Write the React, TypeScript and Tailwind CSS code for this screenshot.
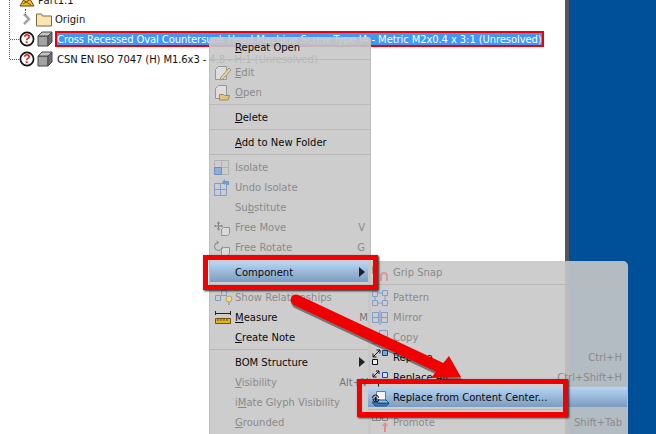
import type { ReactNode } from 'react'

type Row = {
  label?: string
  key?: number
  off?: boolean
  hot?: boolean
  keys?: string
  sub?: boolean
  icon?: ReactNode
  sep?: boolean
}

const Line = ({ d, c = '#7f9ccb' }: { d: string; c?: string }) => <path d={d} fill="none" stroke={c} strokeWidth="1" />

const ico = (body: ReactNode, o = 1) => (
  <svg width="20" height="20" viewBox="0 0 20 20" style={{ opacity: o }}>
    {body}
  </svg>
)

const FreeIcon = ({ rotate }: { rotate?: boolean }) =>
  ico(
    <>
      {rotate ? <Line d="M5.500 5.500a4 4 0 1 0 4 4M3.500 4l2 1.500-2 1.500" c="#777" /> : <Line d="M1 9h9M5.500 4.500v9M4 6h3M4 12h3M2.500 8v2M8.500 8v2" c="#777" />}
      <path d="M8.500 12.500l2-2h6v6l-2 2h-6z" fill="#ddd" stroke="#888" />
    </>,
    0.85,
  )

// 左边菜单
const leftMenu: Row[] = [
  { label: 'Repeat Open', key: 0 },
  { sep: true },
  {
    label: 'Edit',
    key: 0,
    off: true,
    icon: ico(
      <>
        <path d="M2.500 7.500l3-3h8v13h-11z" fill="#dedede" stroke="#969696" />
        <path d="M8 15l8-9 2 2-8 9-3 1z" fill="#e2d3a0" stroke="#a09878" />
      </>,
    ),
  },
  {
    label: 'Open',
    key: 0,
    off: true,
    icon: ico(
      <>
        <path d="M2.500 6.500l3-3h8v13h-11z" fill="#dedede" stroke="#969696" />
        <path d="M6.500 12.500h4l1 1h5l-1.500 4.500h-8.500z" fill="#e4c27c" stroke="#a08a58" />
      </>,
    ),
  },
  { sep: true },
  { label: 'Delete', key: 0 },
  { sep: true },
  { label: 'Add to New Folder', key: 0 },
  { sep: true },
  {
    label: 'Isolate',
    off: true,
    icon: ico(
      <>
        <Line d="M1.500 3.500h7v7h-7zM8.500 3.500h7v7h-7zM8.500 10.500h7v7h-7z" c="#b0b0b0" />
        <path d="M1.500 10.500h7v7h-7z" fill="#8fb0d0" stroke="#6d8fc4" />
      </>,
    ),
  },
  {
    label: 'Undo Isolate',
    off: true,
    icon: ico(
      <>
        <Line d="M1.500 6.500h6v6h-6zM7.500 6.500h6v6h-6zM1.500 12.500h6v6h-6zM7.500 12.500h6v6h-6z" />
        <path d="M9 5l3-3v2h4v4h-2v-2h-2v2z" fill="#6d9bd0" />
      </>,
    ),
  },
  { label: 'Substitute', key: 2, off: true },
  { label: 'Free Move', off: true, keys: 'V', icon: <FreeIcon /> },
  { label: 'Free Rotate', off: true, keys: 'G', icon: <FreeIcon rotate /> },
  { sep: true },
  { label: 'Component', hot: true, sub: true },
  { sep: true },
  {
    label: 'Show Relationships',
    off: true,
    icon: ico(
      <>
        <Line d="M2.500 8.500h5v5h-5zM8.500 3.500h5v5h-5z" />
        <circle cx="16" cy="12" r="3" fill="#f0d890" stroke="#b8a060" />
        <path d="M15 15h2v3h-2z" fill="#aaa" />
      </>,
    ),
  },
  {
    label: 'Measure',
    key: 0,
    keys: 'M',
    icon: ico(
      <>
        <path d="M2.500 4v4M17.500 4v4M2.500 6.500h15" stroke="#222" fill="none" />
        <path d="M2.500 11.500h15v5h-15z" fill="#e6b422" stroke="#6f5408" />
        <path d="M5 12v2M8 12v2M11 12v2M14 12v2" stroke="#5a4408" />
      </>,
    ),
  },
  { label: 'Create Note', key: 0 },
  { sep: true },
  { label: 'BOM Structure', sub: true },
  { label: 'Visibility', key: 0, off: true, keys: 'Alt+V' },
  { label: 'iMate Glyph Visibility', key: 1, off: true },
  { label: 'Grounded', key: 0, off: true },
]

// 右边子菜单
const rightMenu: Row[] = [
  {
    label: 'Grip Snap',
    off: true,
    icon: ico(
      <>
        <Line d="M1.500 4.500h5v7h-5z" c="#999" />
        <path d="M10 19v-5a3 3 0 0 1 6 0v5" fill="none" stroke="#d99a9a" strokeWidth="2" />
      </>,
    ),
  },
  { sep: true },
  {
    label: 'Pattern',
    off: true,
    icon: ico(<Line d="M1.500 4.500h5v5h-5zM11.500 3.500h5v5h-5zM1.500 13.500h5v5h-5zM11.500 13.500h5v5h-5zM4 10v3M14 9v4M7 16h4M7 6h4" />),
  },
  { label: 'Mirror', off: true, icon: ico(<Line d="M1.500 5.500h6v5h-6zM1.500 10.500h6v5h-6zM10.500 5.500h6v5h-6zM10.500 10.500h6v5h-6zM9 3v15" />) },
  { label: 'Copy', off: true, icon: ico(<Line d="M1.500 10.500h6v6h-6zM8.500 3.500h8v6h-8z" />) },
  {
    label: 'Replace',
    keys: 'Ctrl+H',
    icon: ico(
      <>
        <path d="M11.500 3.500h5v5h-5z" fill="#7ba7d4" stroke="#1f3f80" />
        <path d="M1.500 12.500h5v5h-5z" fill="#eee" stroke="#111" />
        <path d="M2 10l7-7M2 6.500V10h3.500M5.500 3H9v3.500" fill="none" stroke="#111" />
      </>,
    ),
  },
  {
    label: 'Replace All',
    keys: 'Ctrl+Shift+H',
    icon: ico(
      <>
        <path d="M11.500 5.500h5v5h-5z" fill="#cfe0f2" stroke="#1f3fb0" />
        <path d="M1.500 15.500h6v4" fill="none" stroke="#111" />
        <path d="M2 10l6-6M2 6.500V10h3.500M5 4h3v3" fill="none" stroke="#111" />
      </>,
    ),
  },
  {
    label: 'Replace from Content Center...',
    hot: true,
    icon: ico(
      <>
        <path d="M5.500 4.500h9v9h-9z" fill="#f4f4f4" stroke="#777" />
        <path d="M1 15l6 1.500h11L15.500 19H4z" fill="#3f7cbc" stroke="#1f4f8a" />
        <path d="M5 13l10 0 3 3H7z" fill="#8fc0e8" stroke="#1f4f8a" />
        <path d="M1.500 11a3 3 0 0 1 6 0M8 12a3 3 0 0 1-6 0M4.500 10v4M2.500 12h4" fill="none" stroke="#111" />
      </>,
    ),
  },
  { sep: true },
  {
    label: 'Promote',
    off: true,
    keys: 'Shift+Tab',
    icon: ico(
      <>
        <Line d="M1.500 4.500h4v4h-4zM5.500 4.500h4v4h-4zM11.500 4.500h5v4h-5zM9.500 6h2" c="#888" />
        <path d="M14 10l3 4h-2v6h-2v-6h-2z" fill="#e58a8a" />
      </>,
    ),
  },
]

function Label({ text, k }: { text: string; k?: number }) {
  if (k === undefined) return <span>{text}</span>
  return (
    <span>
      {text.slice(0, k)}
      <u>{text[k]}</u>
      {text.slice(k + 1)}
    </span>
  )
}

function MenuRows({ rows, iconPad }: { rows: Row[]; iconPad: string }) {
  return (
    <>
      {rows.map((r, i) =>
        r.sep ? (
          <div key={i} className="h-[5px] flex items-center">
            <div className="h-px w-full bg-[#b9b9b9]" />
          </div>
        ) : (
          <div
            key={i}
            className={`flex items-center whitespace-nowrap h-[20px] ${r.hot ? 'bg-gradient-to-b from-[#b8d6f3] to-[#7c9cbf]' : ''} ${r.off ? 'text-[#8a8a8a]' : 'text-[#0a0a0a]'}`}
          >
            <div className={`w-[25px] h-5 flex items-center shrink-0 ${iconPad}`}>{r.icon}</div>
            <Label text={r.label ?? ''} k={r.key} />
            <div className="flex-1" />
            {r.keys && <span className={r.label === 'Measure' || r.label === 'Visibility' ? 'text-[#777] pr-[2px]' : 'text-[#8a8a8a] pr-[5px]'}>{r.keys}</span>}
            {r.sub && <span className="w-0 h-0 mr-[5px] border-y-[5px] border-y-transparent border-l-[6px] border-l-[#222]" />}
          </div>
        ),
      )}
    </>
  )
}

const Unresolved = () => (
  <svg width="16" height="16" viewBox="0 0 17 17" className="shrink-0">
    <circle cx="8.500" cy="8.500" r="7" fill="#fff" stroke="#111" strokeWidth="1.800" />
    <text x="8.500" y="13" textAnchor="middle" fontSize="13" fontWeight="700" fill="#d81a1a" fontFamily="Liberation Sans, sans-serif">
      ?
    </text>
  </svg>
)

const Cube = () => (
  <svg width="16" height="16" viewBox="0 0 16 16" className="shrink-0">
    <path d="M1 5h10v10H1z" fill="#a2a2a2" stroke="#444" />
    <path d="M1 5l4-4h10l-4 4z" fill="#c4c4c4" stroke="#444" />
    <path d="M11 5l4-4v10l-4 4z" fill="#6e6e6e" stroke="#444" />
  </svg>
)

function Tree({ label, selected }: { label: string; selected?: boolean }) {
  return (
    <div className="h-5 flex items-center gap-[2px] relative">
      <div className="absolute -left-[9px] top-1/2 w-[9px] border-t border-dotted border-[#555]" />
      <Unresolved />
      <Cube />
      <span
        className={`h-4 flex items-center border-2 whitespace-nowrap tracking-[-0.1px] ${selected ? 'bg-[#3f97f7] text-white border-[#f00000]' : 'border-transparent'}`}
      >
        {label}
      </span>
    </div>
  )
}

export default function App() {
  return (
    <div className="relative w-[656px] h-[434px] overflow-hidden flex bg-[#004f99] text-[10px] font-['DejaVu_Sans',sans-serif]">
      {/* 模型树 */}
      <div className="relative w-[565px] bg-white text-[#111] overflow-hidden">
        <div className="absolute left-[9px] top-0 h-[59px] border-l border-dotted border-[#555]" />
        <div className="absolute left-[25px] top-[9px] h-[6px] border-l border-dotted border-[#555]" />
        <div className="-mt-[10px] pl-[19px]">
          <div className="h-5 flex items-center gap-[3px]">
            <svg width="16" height="16" viewBox="0 0 16 16">
              <path d="M1 14L8 2l7 12z" fill="#f2c230" stroke="#5a4408" />
              <path d="M4 12l8-5M4 8l8 5" stroke="#7a4a08" />
            </svg>
            <span>Part1.1</span>
          </div>
          <div className="h-5 flex items-center pl-[3px] -mt-px">
            <svg width="14" height="14" viewBox="0 0 14 14">
              <path d="M2 2l5 5-5 5" fill="none" stroke="#a4a4a4" strokeWidth="2.500" />
            </svg>
            <svg width="18" height="17" viewBox="0 0 18 16" className="ml-[-1px]">
              <path d="M1.500 14.500v-12h5l1 2h9v10z" fill="#fbe4ae" stroke="#77694a" />
            </svg>
            <span className="ml-[2px]">Origin</span>
          </div>
          <Tree label="Cross Recessed Oval Countersunk Head Machine Screw Type IA - Metric M2x0.4 x 3:1 (Unresolved)" selected />
          <Tree label="CSN EN ISO 7047 (H) M1.6x3 - 4.8 - H:1 (Unresolved)" />
        </div>
      </div>
      <div className="w-1 bg-[#565656]" />
      <div className="flex-1" />

      {/* 上下文菜单 */}
      <div className="absolute left-[209px] top-[37px] w-[162px] h-[400px] rounded-[3px] bg-[#c8c8c8]/90 border-l border-r border-[#bdbdbd]">
        <MenuRows rows={leftMenu} iconPad="pl-[3px]" />
      </div>
      <div className="absolute left-[368px] top-[261px] w-[260px] h-[180px] rounded-tr-[5px] bg-[#c8c8c8]/90 border-r border-[#b8bec6] pt-px">
        <MenuRows rows={rightMenu} iconPad="pl-[3px]" />
      </div>

      {/* 红框和箭头 */}
      <div className="absolute left-[203px] top-[255px] w-[175px] h-[35px] border-[5px] border-[#f00000] shadow-[1px_1px_2px_#222]" />
      <div className="absolute left-[357px] top-[379px] w-[211px] h-[38px] border-[5px] border-[#f00000] shadow-[1px_1px_2px_#222]" />
      <svg className="absolute left-0 top-0 pointer-events-none" width="656" height="434" viewBox="0 0 656 434">
        <path d="M296 301L441 369" stroke="#222" strokeWidth="11" strokeLinecap="round" opacity=".5" transform="translate(1 2)" />
        <path d="M461 379l-22 0 10-20z" fill="#222" opacity=".5" transform="translate(1 1)" />
        <path d="M296 300L441 368" stroke="#f00000" strokeWidth="11" strokeLinecap="round" />
        <path d="M461 377l-30 1 18-22z" fill="#f00000" />
      </svg>
    </div>
  )
}
